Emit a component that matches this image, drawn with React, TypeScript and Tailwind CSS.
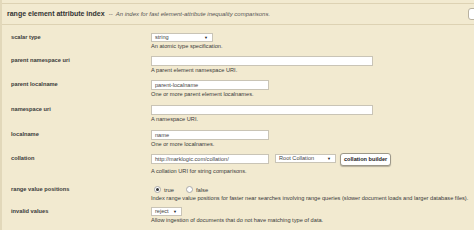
import React from "react";

const F = { fontFamily: '"Liberation Sans", Arial, sans-serif' };

function Label({ children }: { children: React.ReactNode }) {
  return (
    <div className="w-[149px] shrink-0 pl-[9px] text-[5.7px] font-bold leading-[9px] text-[#3a3a3a]">
      {children}
    </div>
  );
}

function Desc({ children, cls = "" }: { children: React.ReactNode; cls?: string }) {
  return <div className={"text-[5.65px] leading-[8px] text-[#3a3a3a] whitespace-nowrap " + cls}>{children}</div>;
}

function Input({ w, value = "" }: { w: string; value?: string }) {
  return (
    <div className={"h-[10px] bg-white border border-[#c9c4b6] flex items-center px-[3px] text-[5.6px] text-[#444] " + w}>
      {value}
    </div>
  );
}

function Select({ w, value }: { w: string; value: string }) {
  return (
    <div className={"h-[9px] bg-white border border-[#c9c4b6] flex items-center justify-between pl-[3px] pr-[4px] text-[5.6px] text-[#444] " + w}>
      <span>{value}</span>
      <span className="text-[4px] text-[#222]">▼</span>
    </div>
  );
}

function Radio({ checked }: { checked?: boolean }) {
  return (
    <span className="w-[7px] h-[7px] rounded-full border border-[#a9a9a9] bg-white flex items-center justify-center">
      {checked && <span className="w-[3px] h-[3px] rounded-full bg-[#333]" />}
    </span>
  );
}

export default function App() {
  return (
    <div style={F} className="w-[474px] h-[230px] bg-[#f2ead0] overflow-hidden border-l-2 border-[#e2d8ba] flex flex-col">
      <div className="mt-[3px] h-[22px] shrink-0 border-y border-[#ddd2b3] flex items-center pl-[5px]">
        <span className="text-[7px] font-bold text-[#333]">range element attribute index</span>
        <span className="text-[6px] text-[#555] ml-[4px]">--</span>
        <span className="text-[6px] italic text-[#555] ml-[3px]">An index for fast element-attribute inequality comparisons.</span>
        <div className="ml-auto mr-[-8px] w-[14px] h-[12px] rounded-[3px] bg-white border border-[#b9b2a0] shrink-0" />
      </div>

      <div className="pt-[8px] flex flex-col">
        <div className="h-[23px] flex">
          <Label>scalar type</Label>
          <div className="flex flex-col">
            <Select w="w-[62px]" value="string" />
            <Desc>An atomic type specification.</Desc>
          </div>
        </div>

        <div className="h-[24px] flex">
          <Label>parent namespace uri</Label>
          <div className="flex flex-col">
            <Input w="w-[222px]" />
            <Desc>A parent element namespace URI.</Desc>
          </div>
        </div>

        <div className="h-[25px] flex">
          <Label>parent localname</Label>
          <div className="flex flex-col">
            <Input w="w-[118px]" value="parent-localname" />
            <Desc>One or more parent element localnames.</Desc>
          </div>
        </div>

        <div className="h-[25px] flex">
          <Label>namespace uri</Label>
          <div className="flex flex-col">
            <Input w="w-[222px]" />
            <Desc>A namespace URI.</Desc>
          </div>
        </div>

        <div className="h-[24px] flex">
          <Label>localname</Label>
          <div className="flex flex-col">
            <Input w="w-[118px]" value="name" />
            <Desc>One or more localnames.</Desc>
          </div>
        </div>

        <div className="h-[31px] flex">
          <Label>collation</Label>
          <div className="flex flex-col">
            <div className="flex items-start">
              <Input w="w-[118px]" value="http://marklogic.com/collation/" />
              <div className="ml-[6px]">
                <Select w="w-[61px]" value="Root Collation" />
              </div>
              <div className="ml-[4px] mt-[-1px] h-[13px] px-[3px] rounded-[3px] bg-white border border-[#9d9889] shadow-[0_1px_1px_rgba(0,0,0,0.25)] flex items-center text-[5.6px] font-bold text-[#222]">
                collation builder
              </div>
            </div>
            <Desc cls="mt-[1px]">A collation URI for string comparisons.</Desc>
          </div>
        </div>

        <div className="h-[22px] flex">
          <Label>range value positions</Label>
          <div className="flex flex-col">
            <div className="flex items-center h-[9px] pl-[3px] text-[5.8px] text-[#3a3a3a]">
              <Radio checked />
              <span className="ml-[3px] mt-[2px]">true</span>
              <span className="ml-[12px]"><Radio /></span>
              <span className="ml-[3px] mt-[1px]">false</span>
            </div>
            <Desc>Index range value positions for faster near searches involving range queries (slower document loads and larger database files).</Desc>
          </div>
        </div>

        <div className="h-[22px] flex">
          <Label>invalid values</Label>
          <div className="flex flex-col">
            <Select w="w-[31px]" value="reject" />
            <Desc>Allow ingestion of documents that do not have matching type of data.</Desc>
          </div>
        </div>
      </div>
    </div>
  );
}
